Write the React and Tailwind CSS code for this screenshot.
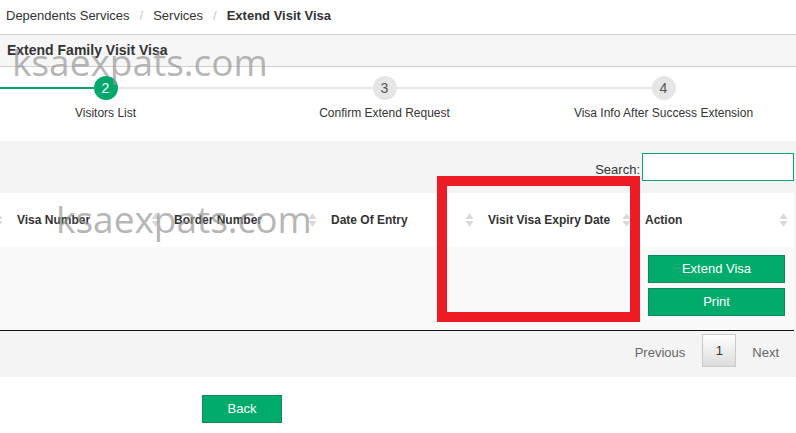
import { Fragment } from 'react';

const COLUMNS = ['', 'Visa Number', 'Border Number', 'Date Of Entry', 'Visit Visa Expiry Date', 'Action'];

const STEPS = [
  { n: 2, label: 'Visitors List', done: true, left: 'bg-[#00a86b]', right: 'bg-[#e6e6e6]' },
  { n: 3, label: 'Confirm Extend Request', done: false, left: 'bg-[#e6e6e6]', right: 'bg-[#e6e6e6]' },
  { n: 4, label: 'Visa Info After Success Extension', done: false, left: 'bg-[#e6e6e6]', right: 'bg-transparent' },
];

function SortIcon() {
  return (
    <svg width="9" height="16" viewBox="0 0 9 16" className="shrink-0">
      <path d="M4.5 1 L8.5 7 L0.5 7 Z" fill="#d9d9d9" />
      <path d="M4.5 15 L8.5 9 L0.5 9 Z" fill="#d9d9d9" />
    </svg>
  );
}

function GreenButton({ children, className = '' }) {
  return (
    <button
      type="button"
      className={`flex items-center justify-center border border-[#0c8a5c] bg-[#00ab6c] text-[13px] text-white ${className}`}
    >
      {children}
    </button>
  );
}

export default function App() {
  return (
    <div className="relative h-[433px] w-[796px] overflow-hidden bg-white font-['Liberation_Sans',Arial,sans-serif] text-[#333]">
      {/* breadcrumb */}
      <div className="flex h-[35px] items-center gap-[10px] border-b border-[#cfcfcf] px-[6px] pb-[3px] text-[13px]">
        <span>Dependents Services</span>
        <span className="text-[#c8c8c8]">/</span>
        <span>Services</span>
        <span className="text-[#c8c8c8]">/</span>
        <span className="font-bold">Extend Visit Visa</span>
      </div>

      {/* panel title */}
      <div className="flex h-[32px] items-center border-b border-[#cfcfcf] bg-[#f6f6f6] px-[7px] text-[14px] font-bold">
        Extend Family Visit Visa
      </div>

      {/* stepper */}
      <div className="h-[74px] overflow-hidden pt-[9px]">
        <div className="-ml-[34px] flex">
          {STEPS.map((step) => (
            <div key={step.n} className="flex w-[279px] shrink-0 flex-col items-center">
              <div className="flex h-[24px] w-full items-center">
                <div className={`h-[2px] flex-1 ${step.left}`} />
                <div
                  className={`flex h-[24px] w-[24px] items-center justify-center rounded-full text-[14px] ${
                    step.done ? 'bg-[#00a86b] text-white' : 'bg-[#e6e6e6] text-[#555]'
                  }`}
                >
                  {step.n}
                </div>
                <div className={`h-[2px] flex-1 ${step.right}`} />
              </div>
              <p className="mt-[6px] text-[12px] leading-[14px] text-[#333]">{step.label}</p>
            </div>
          ))}
        </div>
      </div>

      {/* table area */}
      <div className="bg-[#f4f4f4] pr-[2px]">
        <div className="flex h-[52px] items-center justify-end">
          <label className="mt-[6px] text-[13px] text-[#333]">Search:</label>
          <input className="ml-[2px] h-[28px] w-[152px] border border-[#00a86b] bg-white outline-none" />
        </div>

        <div className="overflow-hidden">
          <div className="-ml-[148px] flex h-[54px] bg-white">
            {COLUMNS.map((col, i) => (
              <div key={i} className="flex w-[157px] shrink-0 items-center justify-between pl-[8px] pr-[6px]">
                <span className="text-[12px] font-bold text-[#333]">{col}</span>
                <SortIcon />
              </div>
            ))}
          </div>

          <div className="-ml-[148px] flex h-[84px] border-b border-[#111] bg-[#f9f9f9]">
            {COLUMNS.map((col, i) => (
              <Fragment key={i}>
                {col === 'Action' ? (
                  <div className="flex w-[157px] shrink-0 flex-col gap-[5px] pl-[11px] pr-[9px] pt-[8px]">
                    <GreenButton className="h-[28px] w-[137px]">Extend Visa</GreenButton>
                    <GreenButton className="h-[28px] w-[137px]">Print</GreenButton>
                  </div>
                ) : (
                  <div className="w-[157px] shrink-0" />
                )}
              </Fragment>
            ))}
          </div>
        </div>

        <div className="flex h-[46px] items-start justify-end pr-[15px] pt-[3px] text-[13px] text-[#666]">
          <span className="mt-[9px]">Previous</span>
          <span className="ml-[17px] flex h-[33px] w-[34px] items-center justify-center border border-[#cacaca] bg-[linear-gradient(180deg,#fff_0%,#dcdcdc_100%)] text-[#333]">
            1
          </span>
          <span className="ml-[16px] mt-[9px]">Next</span>
        </div>
      </div>

      {/* back */}
      <div className="pl-[202px] pt-[18px]">
        <GreenButton className="h-[28px] w-[80px]">Back</GreenButton>
      </div>

      {/* annotation + watermarks */}
      <div className="pointer-events-none absolute left-[437px] top-[176px] h-[146px] w-[203px] border-[10px] border-[#ed1c24]" />
      <div className="pointer-events-none absolute left-[12px] top-[40px] font-['Open_Sans',sans-serif] text-[37px] leading-[44px] text-[rgba(150,150,150,0.7)]">
        ksaexpats.com
      </div>
      <div className="pointer-events-none absolute left-[56px] top-[197px] font-['Open_Sans',sans-serif] text-[37px] leading-[44px] text-[rgba(150,150,150,0.7)]">
        ksaexpats.com
      </div>
    </div>
  );
}
